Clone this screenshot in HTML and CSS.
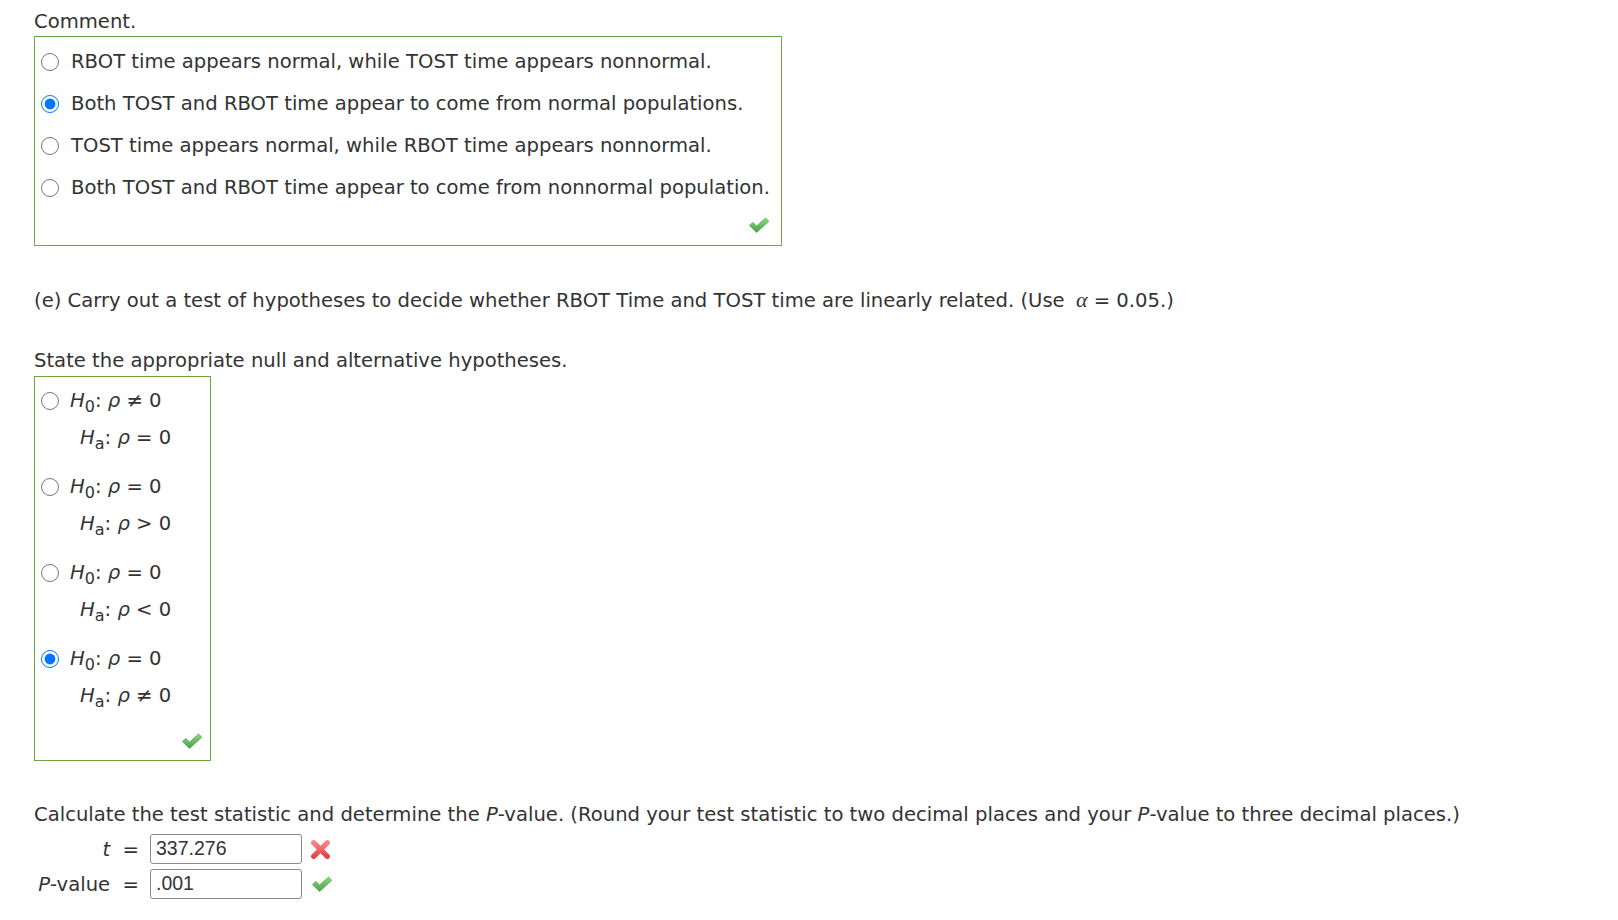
FILE: index.html
```html
<!DOCTYPE html>
<html lang="en">
<head>
    <meta charset="UTF-8">
    <title>Question</title>
    <link rel="stylesheet" href="styles.css">
</head>
<body>
    <div class="question">
        <p class="intro">Comment.</p>
        <div class="answer-box">
            <label class="choice"><input type="radio" name="comment"><span>RBOT time appears normal, while TOST time appears nonnormal.</span></label>
            <label class="choice"><input type="radio" name="comment" checked><span>Both TOST and RBOT time appear to come from normal populations.</span></label>
            <label class="choice"><input type="radio" name="comment"><span>TOST time appears normal, while RBOT time appears nonnormal.</span></label>
            <label class="choice"><input type="radio" name="comment"><span>Both TOST and RBOT time appear to come from nonnormal population.</span></label>
            <div class="mark-row">
                <svg class="ok" viewBox="0 0 22 17"><defs><linearGradient id="g1" x1="0" y1="0" x2="0" y2="1"><stop offset="0" stop-color="#8fd97f"/><stop offset="1" stop-color="#46a24b"/></linearGradient></defs><path d="M1.5 8.5 L4.8 5.4 L8.6 9 L17.6 1 L20.8 4.2 L8.6 15.5 Z" fill="url(#g1)" stroke="#5aa856" stroke-width="0.8" stroke-linejoin="round"/></svg>
            </div>
        </div>

        <p class="part">(e) Carry out a test of hypotheses to decide whether RBOT Time and TOST time are linearly related. (Use <span class="alpha">α</span> = 0.05.)</p>

        <p class="lead">State the appropriate null and alternative hypotheses.</p>
        <div class="answer-box hyp-box">
            <label class="hyp">
                <span class="hyp-line"><input type="radio" name="hyp"><span><i>H</i><sub>0</sub>: <i>ρ</i> ≠ 0</span></span>
                <span class="hyp-line alt"><span><i>H</i><sub>a</sub>: <i>ρ</i> = 0</span></span>
            </label>
            <label class="hyp">
                <span class="hyp-line"><input type="radio" name="hyp"><span><i>H</i><sub>0</sub>: <i>ρ</i> = 0</span></span>
                <span class="hyp-line alt"><span><i>H</i><sub>a</sub>: <i>ρ</i> &gt; 0</span></span>
            </label>
            <label class="hyp">
                <span class="hyp-line"><input type="radio" name="hyp"><span><i>H</i><sub>0</sub>: <i>ρ</i> = 0</span></span>
                <span class="hyp-line alt"><span><i>H</i><sub>a</sub>: <i>ρ</i> &lt; 0</span></span>
            </label>
            <label class="hyp">
                <span class="hyp-line"><input type="radio" name="hyp" checked><span><i>H</i><sub>0</sub>: <i>ρ</i> = 0</span></span>
                <span class="hyp-line alt"><span><i>H</i><sub>a</sub>: <i>ρ</i> ≠ 0</span></span>
            </label>
            <div class="mark-row">
                <svg class="ok" viewBox="0 0 22 17"><defs><linearGradient id="g2" x1="0" y1="0" x2="0" y2="1"><stop offset="0" stop-color="#8fd97f"/><stop offset="1" stop-color="#46a24b"/></linearGradient></defs><path d="M1.5 8.5 L4.8 5.4 L8.6 9 L17.6 1 L20.8 4.2 L8.6 15.5 Z" fill="url(#g2)" stroke="#5aa856" stroke-width="0.8" stroke-linejoin="round"/></svg>
            </div>
        </div>

        <p class="part">Calculate the test statistic and determine the <i>P</i>-value. (Round your test statistic to two decimal places and your <i>P</i>-value to three decimal places.)</p>
        <div class="calc">
            <span class="calc-label"><i>t</i> &nbsp;=</span>
            <input class="calc-input" type="text" value="337.276">
            <svg class="bad" viewBox="0 0 20 20"><defs><linearGradient id="g3" x1="0" y1="0" x2="0" y2="1"><stop offset="0" stop-color="#f98588"/><stop offset="1" stop-color="#e5434a"/></linearGradient></defs><path d="M3.5 3.5 L16.5 16.5 M16.5 3.5 L3.5 16.5" stroke="url(#g3)" stroke-width="5" stroke-linecap="round"/></svg>

            <span class="calc-label"><i>P</i>-value &nbsp;=</span>
            <input class="calc-input" type="text" value=".001">
            <svg class="ok" viewBox="0 0 22 17"><defs><linearGradient id="g4" x1="0" y1="0" x2="0" y2="1"><stop offset="0" stop-color="#8fd97f"/><stop offset="1" stop-color="#46a24b"/></linearGradient></defs><path d="M1.5 8.5 L4.8 5.4 L8.6 9 L17.6 1 L20.8 4.2 L8.6 15.5 Z" fill="url(#g4)" stroke="#5aa856" stroke-width="0.8" stroke-linejoin="round"/></svg>
        </div>
    </div>
</body>
</html>
```

FILE: styles.css
```css
body {
    margin: 0;
    background: #fff;
    color: #333;
    font-family: "DejaVu Sans", Verdana, sans-serif;
    font-size: 19.6px;
}
.question {
    padding: 10px 0 0 34px;
}
p {
    margin: 0;
    line-height: 24px;
}
.intro {
    margin-bottom: 2px;
}
.answer-box {
    width: fit-content;
    border: 1px solid #6aa83f;
    padding: 4px 11px 0 6px;
}
.choice {
    display: flex;
    align-items: center;
    gap: 12px;
    padding: 9px 0;
    line-height: 24px;
}
input[type="radio"] {
    width: 18px;
    height: 18px;
    margin: 0;
    accent-color: #0075ff;
}
.mark-row {
    display: flex;
    justify-content: flex-end;
    align-items: center;
    height: 24px;
    margin-top: 4px;
    padding-bottom: 8px;
}
.ok {
    width: 22px;
    height: 17px;
}
.part {
    margin-top: 42px;
}
.lead {
    margin-top: 36px;
    margin-bottom: 3px;
}
.alpha {
    font-family: "Liberation Serif", "DejaVu Serif", serif;
    font-style: italic;
    font-size: 22px;
    margin-left: 5px;
}
.hyp-box {
    padding: 0 9px 0 6px;
    width: 177px;
    box-sizing: border-box;
}
.hyp {
    display: flex;
    flex-direction: column;
    padding: 12px 0 13px;
}
.hyp-line {
    display: flex;
    align-items: center;
    gap: 11px;
    line-height: 24px;
    white-space: nowrap;
}
.hyp-line.alt {
    margin-top: 13px;
    padding-left: 39px;
}
.hyp i {
    font-style: italic;
}
.hyp sub {
    font-size: 16px;
    vertical-align: -5px;
    line-height: 0;
}
.hyp-box .mark-row {
    margin-top: 8px;
    padding-bottom: 7px;
    margin-right: -2px;
}
.calc {
    display: grid;
    grid-template-columns: 116px 152px 40px;
    row-gap: 5px;
    align-items: center;
    margin-top: 7px;
}
.calc-label {
    text-align: right;
    white-space: nowrap;
    padding-right: 11px;
    margin-left: -13px;
}
.calc-input {
    box-sizing: border-box;
    width: 152px;
    height: 30px;
    margin: 0;
    padding: 0 5px 2px;
    border: 1px solid #8a8a8a;
    border-radius: 3px;
    font-family: "Liberation Sans", Arial, sans-serif;
    font-size: 19.5px;
    color: #333;
}
.bad {
    width: 21px;
    height: 21px;
    margin-left: 8px;
}
.calc .ok {
    margin-left: 9px;
}
```
